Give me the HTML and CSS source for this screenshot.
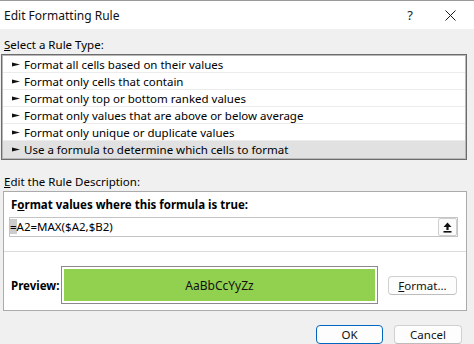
FILE: index.html
```html
<!DOCTYPE html>
<html lang="en">
<head>
<meta charset="utf-8">
<title>Edit Formatting Rule</title>
<link rel="stylesheet" href="styles.css">
</head>
<body>
<div class="dialog">
  <div class="titlebar">
    <span class="title">Edit Formatting Rule</span>
    <span class="help">?</span>
    <svg class="close" width="11" height="11" viewBox="0 0 11 11"><path d="M0.5 0.5 L10.5 10.5 M10.5 0.5 L0.5 10.5" stroke="#1a1a1a" stroke-width="1" fill="none"/></svg>
  </div>

  <div class="label1"><u>S</u>elect a Rule Type:</div>
  <div class="list">
    <div class="row"><svg class="arrow" width="8" height="5" viewBox="0 0 8 5"><path d="M0 0.5 L8 2.5 L0 4.5 Z" fill="#111"/></svg>Format all cells based on their values</div>
    <div class="row"><svg class="arrow" width="8" height="5" viewBox="0 0 8 5"><path d="M0 0.5 L8 2.5 L0 4.5 Z" fill="#111"/></svg>Format only cells that contain</div>
    <div class="row"><svg class="arrow" width="8" height="5" viewBox="0 0 8 5"><path d="M0 0.5 L8 2.5 L0 4.5 Z" fill="#111"/></svg>Format only top or bottom ranked values</div>
    <div class="row"><svg class="arrow" width="8" height="5" viewBox="0 0 8 5"><path d="M0 0.5 L8 2.5 L0 4.5 Z" fill="#111"/></svg>Format only values that are above or below average</div>
    <div class="row"><svg class="arrow" width="8" height="5" viewBox="0 0 8 5"><path d="M0 0.5 L8 2.5 L0 4.5 Z" fill="#111"/></svg>Format only unique or duplicate values</div>
    <div class="row selected"><svg class="arrow" width="8" height="5" viewBox="0 0 8 5"><path d="M0 0.5 L8 2.5 L0 4.5 Z" fill="#111"/></svg>Use a formula to determine which cells to format</div>
  </div>

  <div class="label2"><u>E</u>dit the Rule Description:</div>
  <div class="panel">
    <div class="bold-label">F<u>o</u>rmat values where this formula is true:</div>
    <div class="formula">
      <span class="ftext"><span class="sel">=</span>A2=MAX($A2,$B2)</span>
      <span class="btn-up"><svg width="9" height="11" viewBox="0 0 9 11"><path d="M4.5 0.5 L8.5 5 L5.6 5 L5.6 8 L3.4 8 L3.4 5 L0.5 5 Z" fill="#111"/><rect x="0.5" y="9" width="8" height="1.6" fill="#111"/></svg></span>
    </div>
    <div class="sep"></div>
    <div class="preview-row">
      <span class="preview-label">Preview:</span>
      <div class="preview-box"><div class="preview-fill">AaBbCcYyZz</div></div>
      <span class="btn fmt-btn"><u>F</u>ormat...</span>
    </div>
  </div>

  <div class="footer">
    <span class="btn ok">OK</span>
    <span class="btn cancel">Cancel</span>
  </div>
</div>
</body>
</html>
```

FILE: styles.css
```css
html, body {
  margin: 0;
  padding: 0;
}
body {
  font-family: "Noto Sans", "Liberation Sans", sans-serif;
  font-size: 11.5px;
  color: #000;
  background: #f0f0f0;
}
u {
  text-decoration: underline;
  text-underline-offset: 1px;
}
.dialog {
  width: 474px;
  height: 344px;
  background: #f0f0f0;
  overflow: hidden;
  display: flex;
  flex-direction: column;
  box-sizing: border-box;
  border-top: 1px solid #9a9a9a;
}
.titlebar {
  height: 28px;
  background: #fff;
  display: flex;
  align-items: center;
  padding-left: 4px;
  flex-shrink: 0;
  font-size: 12px;
}
.title {
  flex: 1;
  color: #111;
}
.help {
  font-size: 13px;
  margin-right: 32px;
  color: #222;
}
.close {
  margin-right: 18px;
}
.label1 {
  padding: 7px 0 0 4px;
  line-height: 18px;
}
.list {
  margin-left: 1px;
  width: 466px;
  box-sizing: border-box;
  border: 1px solid #6c6c6c;
  padding: 1px;
  box-shadow: inset 0 0 0 1px #b8b8b8;
  background: #fff;
}
.row {
  height: 17px;
  box-sizing: border-box;
  border-bottom: 1px solid #ececec;
  display: flex;
  align-items: center;
  padding-left: 9px;
  white-space: nowrap;
  background: #fff;
}
.row.selected {
  background: #e1e1e1;
  border-bottom: none;
}
.arrow {
  margin-right: 4px;
}
.label2 {
  padding: 13px 0 0 4px;
  line-height: 18px;
}
.panel {
  margin-left: 3px;
  width: 464px;
  height: 120px;
  box-sizing: border-box;
  border: 1px solid #ababab;
  background: #fff;
  display: flex;
  flex-direction: column;
}
.bold-label {
  font-weight: bold;
  line-height: 18px;
  margin-top: 4px;
  padding-left: 7px;
}
.formula {
  margin: 3px 0 0 5px;
  width: 449px;
  height: 20px;
  box-sizing: border-box;
  border: 1px solid #c4c4c4;
  display: flex;
  align-items: center;
}
.ftext {
  flex: 1;
  line-height: 16px;
}
.sel {
  background: #cccccc;
}
.btn-up {
  width: 19px;
  height: 18px;
  box-sizing: border-box;
  border: 1px solid #cfcfcf;
  border-radius: 2px;
  background: #fbfbfb;
  display: flex;
  align-items: center;
  justify-content: center;
}
.sep {
  margin-top: 14px;
  height: 1px;
  background: #dcdcdc;
}
.preview-row {
  margin-top: 14px;
  display: flex;
  align-items: center;
}
.preview-label {
  width: 50px;
  padding-left: 7px;
  font-weight: bold;
}
.preview-box {
  width: 317px;
  height: 38px;
  box-sizing: border-box;
  border: 1px solid #8a8a8a;
  padding: 2px;
  background: #fff;
}
.preview-fill {
  height: 100%;
  background: #92d050;
  display: flex;
  align-items: center;
  justify-content: center;
  color: #111;
  font-size: 12px;
}
.btn {
  box-sizing: border-box;
  background: #fdfdfd;
  border: 1px solid #d0d0d0;
  border-bottom-color: #bdbdbd;
  border-radius: 4px;
  display: flex;
  align-items: center;
  justify-content: center;
  color: #111;
}
.fmt-btn {
  margin-left: 10px;
  width: 69px;
  height: 19px;
}
.footer {
  margin-top: 14px;
  display: flex;
  justify-content: flex-end;
  gap: 11px;
  padding-right: 12px;
}
.ok {
  width: 67px;
  height: 19px;
  border: 1px solid #0067c0;
}
.cancel {
  width: 68px;
  height: 19px;
}
```
